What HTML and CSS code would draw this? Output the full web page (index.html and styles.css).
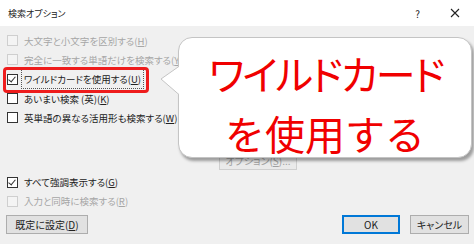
FILE: index.html
```html
<!DOCTYPE html>
<html lang="ja">

<head>
    <meta charset="UTF-8">
    <title>検索オプション</title>
    <link rel="stylesheet" href="styles.css">
</head>

<body>
    <div class="dialog">
        <div class="titlebar">
            <span class="title">検索オプション</span>
            <span class="help">?</span>
            <svg class="close" width="10" height="10" viewBox="0 0 10 10">
                <path d="M1 1 L9 9 M9 1 L1 9" stroke="#222" stroke-width="1.1" fill="none"/>
            </svg>
        </div>

        <div class="content">
            <div class="row disabled"><span class="box"></span><span class="label">大文字と小文字を区別する(<u>H</u>)</span></div>
            <div class="row disabled"><span class="box"></span><span class="label">完全に一致する単語だけを検索する(<u>Y</u>)</span></div>
            <div class="row"><span class="box checked"></span><span class="label focus">ワイルドカードを使用する(<u>U</u>)</span></div>
            <div class="row"><span class="box"></span><span class="label">あいまい検索 (英)(<u>K</u>)</span></div>
            <div class="row"><span class="box"></span><span class="label">英単語の異なる活用形も検索する(<u>W</u>)</span></div>

            <div class="btn options">オプション(<u>S</u>)...</div>

            <div class="row"><span class="box checked"></span><span class="label">すべて強調表示する(<u>G</u>)</span></div>
            <div class="row disabled"><span class="box"></span><span class="label">入力と同時に検索する(<u>R</u>)</span></div>

            <div class="footer">
                <div class="btn reset">既定に設定(<u>D</u>)</div>
                <div class="spacer"></div>
                <div class="btn ok">OK</div>
                <div class="btn cancel">キャンセル</div>
            </div>
        </div>

        <!-- 赤枠 -->
        <div class="highlight"></div>

        <!-- 吹き出し -->
        <div class="callout">
            <svg class="pointer" width="20" height="32" viewBox="0 0 20 32">
                <path d="M19.5 0 L1 13 L19.5 29" fill="#fff" stroke="#c4c4c4" stroke-width="1"/>
                <rect x="19" y="0" width="3" height="32" fill="#fff"/>
            </svg>
            <div class="line1">ワイルドカード</div>
            <div class="line2">を使用する</div>
        </div>
    </div>
</body>

</html>
```

FILE: styles.css
```css
body {
    margin: 0;
    font-family: "Noto Sans CJK JP", "Noto Sans", sans-serif;
    background-color: #f0f0f0;
}

.dialog {
    position: relative;
    width: 474px;
    height: 244px;
    overflow: hidden;
    background-color: #f0f0f0;
}

.titlebar {
    height: 26px;
    background-color: #fff;
    display: flex;
    align-items: center;
    padding: 0 14px 0 8px;
    font-size: 9px;
    color: #222;
}

.title {
    flex: 1;
    font-feature-settings: "palt";
}

.help {
    font-size: 10px;
    margin-right: 30px;
}

.content {
    padding: 5px 5px 0 7px;
}

.row {
    height: 19.3px;
    display: flex;
    align-items: center;
    font-size: 9.5px;
    color: #222;
    font-feature-settings: "palt";
}

.row.disabled {
    color: #a6a6a6;
}

.box {
    width: 9px;
    height: 9px;
    border: 1px solid #333;
    background-color: #fff;
    margin-right: 6px;
    position: relative;
}

.row.disabled .box {
    border-color: #cfcfcf;
    background-color: #f4f4f4;
}

.box.checked::after {
    content: "";
    position: absolute;
    left: 2px;
    top: 0;
    width: 3px;
    height: 6px;
    border-right: 1.2px solid #333;
    border-bottom: 1.2px solid #333;
    transform: rotate(40deg);
}

.label.focus {
    outline: 1px dotted #555;
    outline-offset: 2px;
}

.btn {
    height: 19px;
    box-sizing: border-box;
    background-color: #e1e1e1;
    border: 1px solid #adadad;
    font-size: 10px;
    color: #222;
    display: flex;
    align-items: center;
    justify-content: center;
    font-feature-settings: "palt";
}

.options {
    width: 78px;
    margin: 24px 0 2px 212px;
    color: #a0a0a0;
    border-color: #cfcfcf;
    background-color: #eaeaea;
    height: 19px;
    align-items: flex-end;
    padding-bottom: 3px;
    line-height: 10px;
}

.footer {
    display: flex;
    margin-top: 4px;
    margin-left: -1px;
}

.reset {
    width: 82px;
}

.spacer {
    flex: 1;
}

.ok {
    width: 58px;
    border: 2px solid #0078d7;
    margin-right: 10px;
}

.cancel {
    width: 59px;
}

.highlight {
    position: absolute;
    left: 3px;
    top: 67px;
    width: 140px;
    height: 20px;
    border: 3px solid #ee1c1c;
    border-radius: 4px;
}

.callout {
    position: absolute;
    left: 178px;
    top: 37px;
    width: 292px;
    height: 106px;
    padding-top: 13px;
    display: flex;
    flex-direction: column;
    align-items: center;
    gap: 16px;
    background-color: #fff;
    border: 1px solid #c4c4c4;
    border-radius: 14px;
    box-shadow: 2px 3px 3px rgba(0, 0, 0, 0.35);
    color: #f00000;
    font-size: 40px;
    line-height: 44px;
}

.pointer {
    position: absolute;
    left: -19px;
    top: 28px;
}

.line1 {
    font-feature-settings: "palt";
    letter-spacing: -2px;
    margin-right: -2px;
}
```
